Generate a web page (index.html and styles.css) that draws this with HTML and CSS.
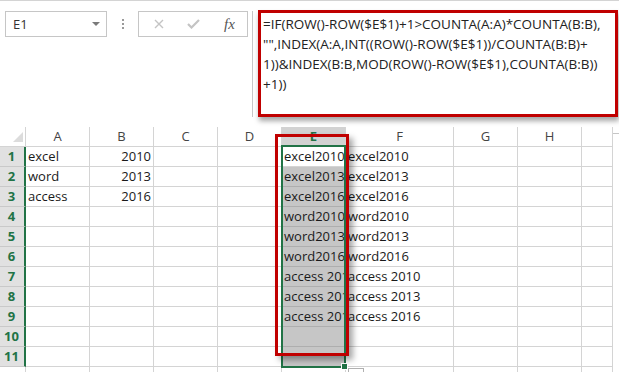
FILE: index.html
```html
<!DOCTYPE html>
<html lang="en">
<head>
    <meta charset="UTF-8">
    <meta name="viewport" content="width=device-width, initial-scale=1.0">
    <title>Cross join of two columns</title>
    <link rel="stylesheet" href="styles.css">
</head>
<body>
    <div class="ribbon-edge"></div>

    <div class="formula-row">
        <div class="name-box">
            <span>E1</span>
            <span class="arrow"></span>
        </div>
        <div class="grip"><i></i><i></i><i></i></div>
        <div class="fx-buttons">
            <svg class="cancel" width="10" height="10" viewBox="0 0 10 10">
                <path d="M1 1L9 9M9 1L1 9" stroke="#c4c4c4" stroke-width="1.4" fill="none"/>
            </svg>
            <svg class="enter" width="13" height="10" viewBox="0 0 13 10">
                <path d="M1 5L4.5 8.5L12 1" stroke="#c4c4c4" stroke-width="2.2" fill="none"/>
            </svg>
            <span class="fx">fx</span>
        </div>
        <div class="formula-bar">
            <div class="formula-box">=IF(ROW()-ROW($E$1)+1&gt;COUNTA(A:A)*COUNTA(B:B),<br>"",INDEX(A:A,INT((ROW()-ROW($E$1))/COUNTA(B:B)+<br>1))&amp;INDEX(B:B,MOD(ROW()-ROW($E$1),COUNTA(B:B))<br>+1))</div>
        </div>
    </div>

    <div class="sheet" id="sheet">
        <div class="selection"><span class="fill-handle"></span></div>
        <div class="callout"></div>
        <div class="quick-analysis"></div>
    </div>

    <script>
        const columns = ["A", "B", "C", "D", "E", "F", "G", "H", ""];

        // cell values, keyed by column + row
        const values = {
            A1: "excel", A2: "word", A3: "access",
            B1: "2010", B2: "2013", B3: "2016",
            E1: "excel2010", E2: "excel2013", E3: "excel2016",
            E4: "word2010", E5: "word2013", E6: "word2016",
            E7: "access 2010", E8: "access 2013", E9: "access 2016",
            F1: "excel2010", F2: "excel2013", F3: "excel2016",
            F4: "word2010", F5: "word2013", F6: "word2016",
            F7: "access 2010", F8: "access 2013", F9: "access 2016"
        };

        const renderSheet = () => {
            const sheet = document.querySelector("#sheet");
            let html = "";

            // header row
            html += `<div class="corner"><span class="tri"></span></div>`;
            columns.forEach((c) => {
                const cls = c === "E" ? "col-head active" : "col-head";
                html += `<div class="${cls}">${c}</div>`;
            });
            html += `<div class="scroll-top"></div>`;

            for (let r = 1; r <= 12; r++) {
                const rowCls = r <= 11 ? "row-head active" : "row-head";
                html += `<div class="${rowCls}">${r <= 11 ? r : ""}</div>`;
                columns.forEach((c) => {
                    const key = c + r;
                    let cls = "cell";
                    if (c === "B") cls += " num";
                    if (c === "E" && r > 1 && r <= 11) cls += " picked";
                    html += `<div class="${cls}">${values[key] || ""}</div>`;
                });
                html += `<div class="scroll"></div>`;
            }

            sheet.insertAdjacentHTML("afterbegin", html);
        };

        renderSheet();
    </script>
</body>
</html>
```

FILE: styles.css
```css
body {
    margin: 0;
    font-family: "Open Sans", "Liberation Sans", sans-serif;
    background-color: #fff;
    color: #222;
    overflow: hidden;
}

.ribbon-edge {
    height: 1px;
    background-color: #d4d4d4;
}

.formula-row {
    display: flex;
    align-items: flex-start;
    height: 126px;
    padding: 9px 0 0 5px;
    box-sizing: border-box;
}

.name-box {
    width: 102px;
    height: 26px;
    margin-top: 1px;
    border: 1px solid #c6c6c6;
    box-sizing: border-box;
    display: flex;
    align-items: center;
    justify-content: space-between;
    padding: 0 6px 0 7px;
    font-size: 13px;
    color: #333;
}

.name-box .arrow {
    border-left: 4px solid transparent;
    border-right: 4px solid transparent;
    border-top: 4px solid #7a7a7a;
}

.grip {
    width: 31px;
    height: 26px;
    margin-top: 1px;
    display: flex;
    flex-direction: column;
    align-items: center;
    justify-content: center;
    gap: 2px;
}

.grip i {
    width: 2px;
    height: 2px;
    background-color: #9a9a9a;
}

.fx-buttons {
    width: 110px;
    height: 26px;
    margin-top: 1px;
    border: 1px solid #c6c6c6;
    box-sizing: border-box;
    display: flex;
    align-items: center;
}

.fx-buttons .cancel {
    margin-left: 15px;
}

.fx-buttons .enter {
    margin-left: 23px;
}

.fx-buttons .fx {
    margin-left: 24px;
    font-family: "Liberation Serif", serif;
    font-style: italic;
    font-size: 15px;
    color: #555;
}

.formula-bar {
    flex: 1;
    height: 106px;
    margin: 1px 0 0 4px;
    padding: 0 1px 0 5px;
    border-left: 1px solid #c6c6c6;
}

.formula-box {
    height: 107px;
    margin-top: -1px;
    border: 3px solid #c00000;
    box-sizing: border-box;
    padding: 1px 2px;
    font-size: 13.5px;
    line-height: 20px;
    color: #222;
    white-space: nowrap;
    box-shadow: 1px 4px 5px rgba(0, 0, 0, 0.35);
}

/* worksheet grid */
.sheet {
    position: relative;
    display: grid;
    grid-template-columns: 26px 64px 64px 64px 64px 64px 108px 64px 64px 31px 6px;
    grid-auto-rows: 20px;
    font-size: 13px;
}

.sheet > div {
    box-sizing: border-box;
}

.corner {
    border-right: 1px solid #d4d4d4;
    border-bottom: 1px solid #d4d4d4;
    display: flex;
    justify-content: flex-end;
    align-items: flex-end;
    padding: 0 2px 4px 0;
}

.corner .tri {
    border-left: 10px solid transparent;
    border-bottom: 10px solid #dcdcdc;
}

.col-head {
    border-right: 1px solid #d4d4d4;
    border-bottom: 1px solid #d4d4d4;
    text-align: center;
    line-height: 19px;
    color: #444;
}

.col-head.active {
    background-color: #d2d2d2;
    color: #217346;
    font-weight: bold;
}

.scroll-top {
    height: 7px;
    border-bottom: 1px solid #c6c6c6;
}

.row-head {
    border-right: 1px solid #d4d4d4;
    border-bottom: 1px solid #d4d4d4;
    text-align: center;
    line-height: 19px;
    color: #444;
    padding-right: 1px;
}

.row-head.active {
    background-color: #e1e1e1;
    border-right: 2px solid #217346;
    border-bottom-color: #c9c9c9;
    color: #217346;
    font-weight: bold;
}

.cell {
    border-right: 1px solid #d4d4d4;
    border-bottom: 1px solid #d4d4d4;
    padding: 0 2px;
    line-height: 19px;
    white-space: nowrap;
    overflow: hidden;
    color: #1a1a1a;
}

.cell.num {
    text-align: right;
}

.cell.picked {
    background-color: #c6c6c6;
    border-bottom-color: #aeaeae;
}

/* overlays */
.selection {
    position: absolute;
    left: 281px;
    top: 18px;
    width: 65px;
    height: 223px;
    border: 2px solid #217346;
    box-sizing: border-box;
    z-index: 1;
}

.fill-handle {
    position: absolute;
    right: -4px;
    bottom: -4px;
    width: 5px;
    height: 5px;
    background-color: #217346;
    border: 1px solid #fff;
}

.callout {
    position: absolute;
    left: 275px;
    top: 7px;
    width: 74px;
    height: 222px;
    border: 3px solid #c00000;
    box-sizing: border-box;
    box-shadow: 4px 4px 6px rgba(0, 0, 0, 0.35);
    z-index: 2;
}

.quick-analysis {
    position: absolute;
    left: 348px;
    top: 241px;
    width: 16px;
    height: 10px;
    border: 1px solid #b0b0b0;
    background-color: #fff;
}
```
